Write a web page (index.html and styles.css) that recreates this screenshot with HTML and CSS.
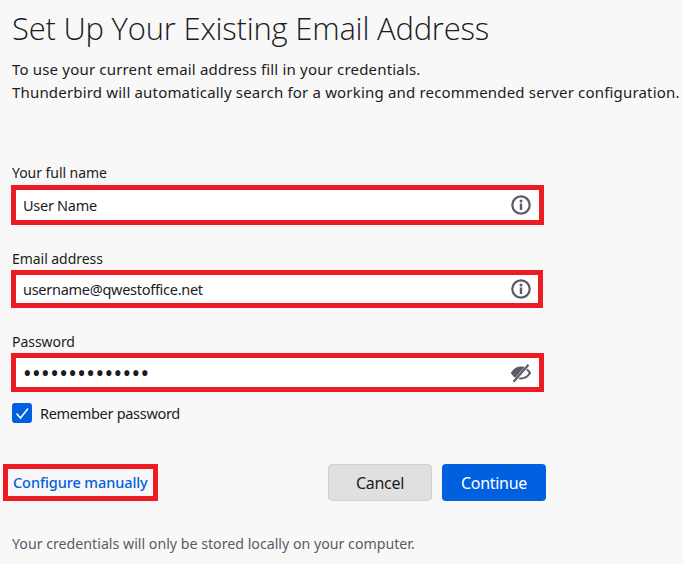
FILE: index.html
```html
<!DOCTYPE html>
<html lang="en">
<head>
<meta charset="utf-8">
<title>Set Up Your Existing Email Address</title>
<link rel="stylesheet" href="styles.css">
</head>
<body>
<main class="page">
  <h1 class="title">Set Up Your Existing Email Address</h1>
  <p class="intro">To use your current email address fill in your credentials.<br>Thunderbird will automatically search for a working and recommended server configuration.</p>
  <form class="form">
    <div class="field field-name">
      <label class="label">Your full name</label>
      <div class="box box-name"><span class="value">User Name</span>
        <svg class="icon" viewBox="0 0 20 20"><circle cx="10" cy="10" r="8.700" fill="none" stroke="currentColor" stroke-width="2.200"/><circle cx="10" cy="5.900" r="1.500" fill="currentColor"/><rect x="8.800" y="8.500" width="2.400" height="6.500" fill="currentColor"/></svg>
      </div>
    </div>
    <div class="field field-email">
      <label class="label">Email address</label>
      <div class="box box-email"><span class="value">username@qwestoffice.net</span>
        <svg class="icon" viewBox="0 0 20 20"><circle cx="10" cy="10" r="8.700" fill="none" stroke="currentColor" stroke-width="2.200"/><circle cx="10" cy="5.900" r="1.500" fill="currentColor"/><rect x="8.800" y="8.500" width="2.400" height="6.500" fill="currentColor"/></svg>
      </div>
    </div>
    <div class="field field-pass">
      <label class="label">Password</label>
      <div class="box box-pass"><span class="dots">••••••••••••••</span>
        <svg class="icon" viewBox="0 0 20 20"><path d="M1 10C3.500 6 6.500 4.500 10 4.500S16.500 6 19 10c-2.500 4-5.500 5.500-9 5.500S3.500 14 1 10Z" fill="none" stroke="currentColor" stroke-width="2"/><path d="M10 4.500C6.500 4.500 3.500 6 1 10c1.200 2 2.500 3.300 4 4.200L13 5.300A9 9 0 0 0 10 4.500Z" fill="currentColor"/><path d="M3 18.500 18 1.500" stroke="#fff" stroke-width="3.400"/><path d="M2.500 18.800 17.500 1.800" stroke="currentColor" stroke-width="2.200"/></svg>
      </div>
    </div>
    <div class="remember">
      <span class="check"><svg viewBox="0 0 20 20"><path d="M4.500 10.500 8.500 15 16 5.500" fill="none" stroke="#fff" stroke-width="1.500"/></svg></span>
      <span class="remember-text">Remember password</span>
    </div>
    <div class="actions">
      <a class="manual">Configure manually</a>
      <div class="buttons">
        <button type="button" class="btn btn-cancel">Cancel</button>
        <button type="button" class="btn btn-continue">Continue</button>
      </div>
    </div>
  </form>
  <p class="note">Your credentials will only be stored locally on your computer.</p>
</main>
</body>
</html>
```

FILE: styles.css
```css
* { box-sizing: border-box; }
html, body { margin: 0; height: 100%; }
body {
  background: #f8f8f8;
  color: #1c1b22;
  font-family: "Noto Sans", "Open Sans", sans-serif;
  overflow: hidden;
}
.page { padding: 8px 0 0 0; width: 683px; }
.title {
  margin: 0 0 0 12px;
  font-size: 31px;
  line-height: 40px;
  font-weight: 300;
  font-family: "Open Sans", "Noto Sans", sans-serif;
  letter-spacing: -0.22px;
  white-space: nowrap;
}
.intro {
  margin: 10px 0 0 12px;
  font-size: 15px;
  line-height: 23px;
  letter-spacing: 0.18px;
  white-space: nowrap;
}
.form { margin-top: 58px; }
.field { margin-left: 11px; }
.field-email { margin-top: 22px; }
.field-pass { margin-top: 22px; }
.label {
  display: block;
  margin-left: 1px;
  font-size: 14px;
  line-height: 21px;
  height: 23px;
  letter-spacing: -0.05px;
}
.field-email .label, .field-pass .label { padding-top: 1px; }
.box {
  display: flex;
  align-items: center;
  justify-content: space-between;
  width: 533px;
  height: 40px;
  border: 5px solid #ed1c24;
  background: #fff;
  padding: 0 8px 1px 7px;
  font-size: 14.5px;
  letter-spacing: -0.28px;
}
.box-email { width: 532px; height: 38px; padding-right: 7px; padding-bottom: 0; }
.box-pass { height: 39px; padding-bottom: 0; }
.value { white-space: nowrap; }
.dots { font-size: 23px; line-height: 24px; letter-spacing: 0.4px; }
.icon { width: 20px; height: 20px; color: #5b5b66; flex: none; }
.remember {
  display: flex;
  align-items: center;
  gap: 8px;
  margin: 11px 0 0 12px;
  height: 20px;
}
.check {
  width: 20px;
  height: 20px;
  border-radius: 3px;
  background: #0060df;
  display: block;
}
.check svg { display: block; width: 20px; height: 20px; }
.remember-text { font-size: 14.5px; letter-spacing: -0.3px; }
.actions {
  display: flex;
  justify-content: space-between;
  align-items: center;
  width: 543px;
  margin: 41px 0 0 3px;
}
.manual {
  display: flex;
  align-items: center;
  width: 155px;
  height: 37px;
  border: 5px solid #ed1c24;
  padding: 0 0 1px 5px;
  color: #0060df;
  font-size: 14.5px;
  font-weight: 500;
  letter-spacing: -0.09px;
  white-space: nowrap;
}
.buttons { display: flex; gap: 10px; }
.btn {
  height: 37px;
  border-radius: 4px;
  font: inherit;
  font-size: 16px;
  letter-spacing: -0.3px;
  padding: 0;
}
.btn-cancel { width: 104px; background: #e0e0e0; border: 1px solid #cfcfd4; color: #1c1b22; }
.btn-continue { width: 104px; background: #0060df; border: 0; color: #fff; }
.note {
  margin: 33px 0 0 12px;
  font-size: 14.2px;
  line-height: 20px;
  color: #5b5b66;
  letter-spacing: 0;
  white-space: nowrap;
}
```
